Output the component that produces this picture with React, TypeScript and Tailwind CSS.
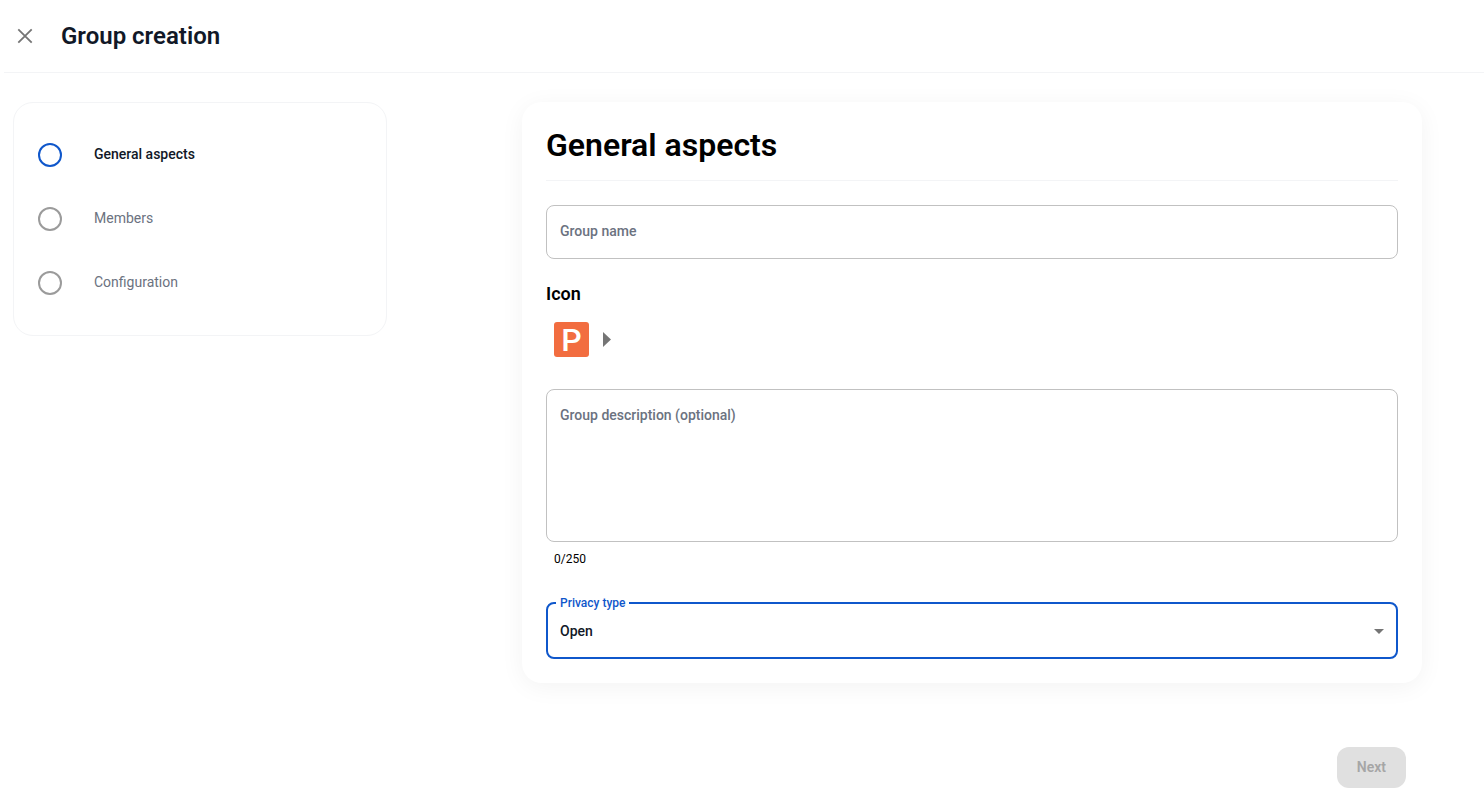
import { useState } from "react";

type StepProps = {
  label: string,
  active: boolean
}

const MAX_DESCRIPTION = 250;

const steps = ["General aspects", "Members", "Configuration"];

const Step = ({ label, active }: StepProps) => {
  return (
    <li className="flex h-16 items-center gap-8" aria-current={active ? "step" : undefined}>
      <span className={`size-6 rounded-full border-2 ${active ? "border-[#0f57cb]" : "border-[#9b9b9b]"}`} />
      <span className={`pb-[2px] text-sm ${active ? "font-medium text-[#111827]" : "text-[#6b7280]"}`}>{label}</span>
    </li>
  );
}

const App = () => {
  const [name, setName] = useState("");
  const [description, setDescription] = useState("");
  const [privacy, setPrivacy] = useState("open");

  return (
    <div className="bg-white font-[Roboto,sans-serif] text-black">
      {/* Header */}
      <header className="ml-1 flex h-[73px] items-center gap-[27px] border-b border-gray-100 pl-3">
        <button type="button" aria-label="Close" className="text-[#757575]">
          <svg className="size-[18px]" viewBox="0 0 18 18" fill="none" stroke="currentColor" strokeWidth="1.8">
            <path d="M2.3 2.3 15.7 15.7M15.7 2.3 2.3 15.7" />
          </svg>
        </button>
        <h1 className="text-2xl font-semibold text-[#111827]">Group creation</h1>
      </header>

      <div className="flex items-start gap-[73px] pt-[29px] pl-[13px]">
        {/* Steps */}
        <nav className="w-[374px] shrink-0 rounded-[20px] border border-gray-100 px-6 py-5">
          <ol>
            {steps.map((step, index) => (
              <Step key={step} label={step} active={index === 0} />
            ))}
          </ol>
        </nav>

        {/* Form */}
        <main className="flex min-w-0 flex-1 justify-center">
          <form className="w-full max-w-[900px]" onSubmit={(e) => e.preventDefault()}>
            <div className="rounded-[20px] p-6 shadow-[0_4px_24px_rgba(0,0,0,0.05)]">
              <h2 className="border-b border-gray-100 pb-4 text-[32px] leading-[38px] font-semibold">General aspects</h2>

              <input
                type="text"
                aria-label="Group name"
                placeholder="Group name"
                value={name}
                onChange={(e) => setName(e.target.value)}
                className="mt-6 block h-[54px] w-full rounded-lg border border-[#c1c1c1] px-[13px] pb-[2px] text-sm font-medium text-[#111827] placeholder:text-[#6b7280] placeholder:opacity-100"
              />

              <h3 className="mt-[21px] text-lg leading-7 font-semibold">Icon</h3>
              <button type="button" aria-label="Choose icon" className="mt-[14px] ml-2 flex items-center gap-[14px]">
                <span className="flex size-[35px] items-center justify-center rounded-[3px] bg-[#f26d40] text-[32px] leading-none font-medium text-white">P</span>
                <svg className="h-[15px] w-2" viewBox="0 0 8 15" fill="#757575">
                  <path d="M0 0 8 7.5 0 15Z" />
                </svg>
              </button>

              <textarea
                aria-label="Group description (optional)"
                placeholder="Group description (optional)"
                maxLength={MAX_DESCRIPTION}
                value={description}
                onChange={(e) => setDescription(e.target.value)}
                className="mt-8 block h-[153px] w-full resize-none rounded-lg border border-[#c1c1c1] px-[13px] py-[15px] text-sm font-medium text-[#111827] placeholder:text-[#6b7280] placeholder:opacity-100"
              />
              <p className="mt-[7px] ml-2 text-xs leading-5">{description.length}/{MAX_DESCRIPTION}</p>

              <fieldset className="mt-[26px] rounded-lg border-2 border-[#0f57cb] px-2 pb-[6px]">
                <legend className="px-1 text-xs leading-4 font-medium text-[#0f57cb]">
                  <label htmlFor="privacy">Privacy type</label>
                </legend>
                <div className="flex items-center pr-1">
                  <select
                    id="privacy"
                    value={privacy}
                    onChange={(e) => setPrivacy(e.target.value)}
                    className="h-10 flex-1 appearance-none pl-1 text-sm font-medium text-[#111827] outline-none"
                  >
                    <option value="open">Open</option>
                    <option value="closed">Closed</option>
                  </select>
                  <svg className="pointer-events-none h-[5px] w-[10px]" viewBox="0 0 10 5" fill="#757575">
                    <path d="M0 0H10L5 5Z" />
                  </svg>
                </div>
              </fieldset>
            </div>

            <div className="mt-16 flex justify-end px-4 pb-4">
              <button type="submit" disabled className="h-[41px] rounded-xl bg-[#e0e0e0] px-5 pb-[2px] text-sm font-semibold text-[#a6a6a6]">
                Next
              </button>
            </div>
          </form>
        </main>
      </div>
    </div>
  );
}

export default App;
